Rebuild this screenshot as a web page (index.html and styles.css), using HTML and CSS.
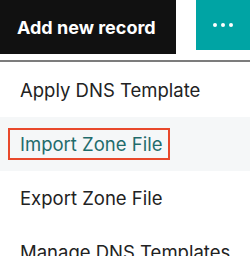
FILE: index.html
```html
<!DOCTYPE html>
<html>
<head>
<meta charset="utf-8">
<link rel="stylesheet" href="styles.css">
</head>
<body>
<div class="toolbar">
  <div class="btn-primary">Add new record</div>
  <div class="btn-more"><span class="dot"></span><span class="dot"></span><span class="dot"></span></div>
</div>
<div class="menu">
  <div class="item">Apply DNS Template</div>
  <div class="item active"><span class="outline">Import Zone File</span></div>
  <div class="item">Export Zone File</div>
  <div class="item">Manage DNS Templates</div>
</div>
</body>
</html>
```
FILE: styles.css
```css
html, body {
  margin: 0;
  padding: 0;
  background: #fff;
  overflow: hidden;
}
body {
  font-family: "Inter", "Liberation Sans", sans-serif;
  width: 250px;
  height: 256px;
}
.toolbar {
  display: flex;
  align-items: flex-start;
  gap: 20px;
  height: 60px;
}
.btn-primary {
  width: 176px;
  height: 54px;
  box-sizing: border-box;
  background: #111111;
  color: #fff;
  font-weight: 700;
  font-size: 18px;
  display: flex;
  align-items: center;
  padding-left: 17px;
}
.btn-more {
  width: 54px;
  height: 50px;
  background: #00a4a4;
  display: flex;
  align-items: center;
  justify-content: center;
  gap: 4px;
}
.dot {
  width: 4px;
  height: 4px;
  border-radius: 50%;
  background: #fff;
}
.menu {
  border-top: 2px solid #7c7c7c;
  padding-top: 1px;
}
.item {
  height: 54px;
  display: flex;
  align-items: center;
  padding-left: 20px;
  font-size: 18.5px;
  color: #222;
  white-space: nowrap;
}
.item.active {
  background: #f5f7f8;
  color: #1f6c6c;
}
.outline {
  margin-left: -12px;
  padding: 3px 6px 3px 10px;
  border: 2px solid #e8482b;
}
```
